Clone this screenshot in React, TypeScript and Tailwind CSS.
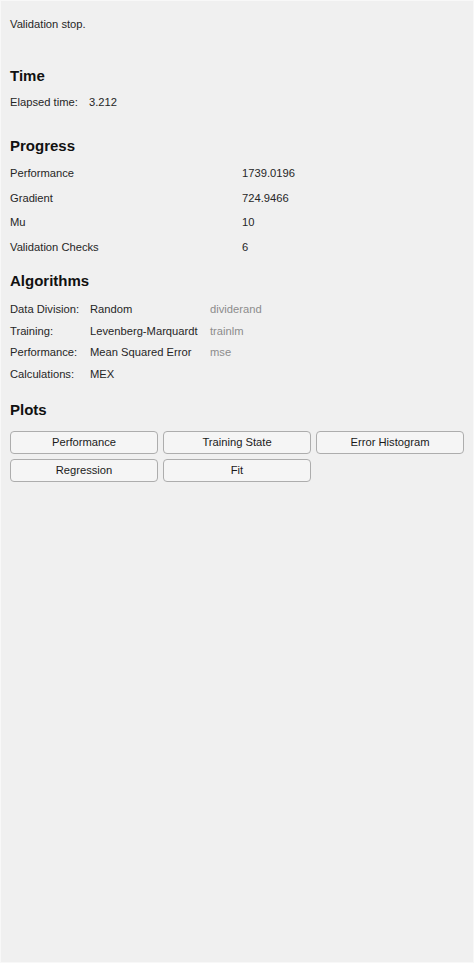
const progress = [
  ['Performance', '1739.0196'],
  ['Gradient', '724.9466'],
  ['Mu', '10'],
  ['Validation Checks', '6'],
];

const algorithms = [
  ['Data Division:', 'Random', 'dividerand'],
  ['Training:', 'Levenberg-Marquardt', 'trainlm'],
  ['Performance:', 'Mean Squared Error', 'mse'],
  ['Calculations:', 'MEX', ''],
];

const plots = ['Performance', 'Training State', 'Error Histogram', 'Regression', 'Fit'];

function Heading({ children, className }: { children: React.ReactNode; className: string }) {
  return <h2 className={`text-[15px] leading-[20px] font-bold text-[#111] ${className}`}>{children}</h2>;
}

export default function App() {
  return (
    <div
      className="h-[963px] w-[474px] bg-[#f0f0f0] border border-[#f8f8f8] text-[11.2px] leading-[16px] text-[#262626]"
      style={{ fontFamily: '"Liberation Sans", Arial, sans-serif' }}
    >
      <div className="pl-[9px] pr-[10px] pt-[15px]">
        <p>Validation stop.</p>

        <Heading className="mt-[34px]">Time</Heading>
        <div className="mt-[8px] flex">
          <span className="w-[79px]">Elapsed time:</span>
          <span>3.212</span>
        </div>

        <Heading className="mt-[26px]">Progress</Heading>
        <div className="mt-[5px]">
          {progress.map(([k, v]) => (
            <div key={k} className="flex h-[24.5px] items-center">
              <span className="w-[232px]">{k}</span>
              <span>{v}</span>
            </div>
          ))}
        </div>

        <Heading className="mt-[12px]">Algorithms</Heading>
        <div className="mt-[7px]">
          {algorithms.map(([k, v, f]) => (
            <div key={k} className="flex h-[21.7px] items-center">
              <span className="w-[80px]">{k}</span>
              <span className="w-[120px]">{v}</span>
              <span className="text-[#8c8c8c]">{f}</span>
            </div>
          ))}
        </div>

        <Heading className="mt-[15px]">Plots</Heading>
        <div className="mt-[11px] grid grid-cols-[148px_148px_148px] gap-x-[5px] gap-y-[5px]">
          {plots.map(p => (
            <button
              key={p}
              className="h-[23px] rounded-[4px] border border-[#adadad] bg-[#f5f5f5] text-[11.2px] text-[#1a1a1a]"
            >
              {p}
            </button>
          ))}
        </div>
      </div>
    </div>
  );
}
